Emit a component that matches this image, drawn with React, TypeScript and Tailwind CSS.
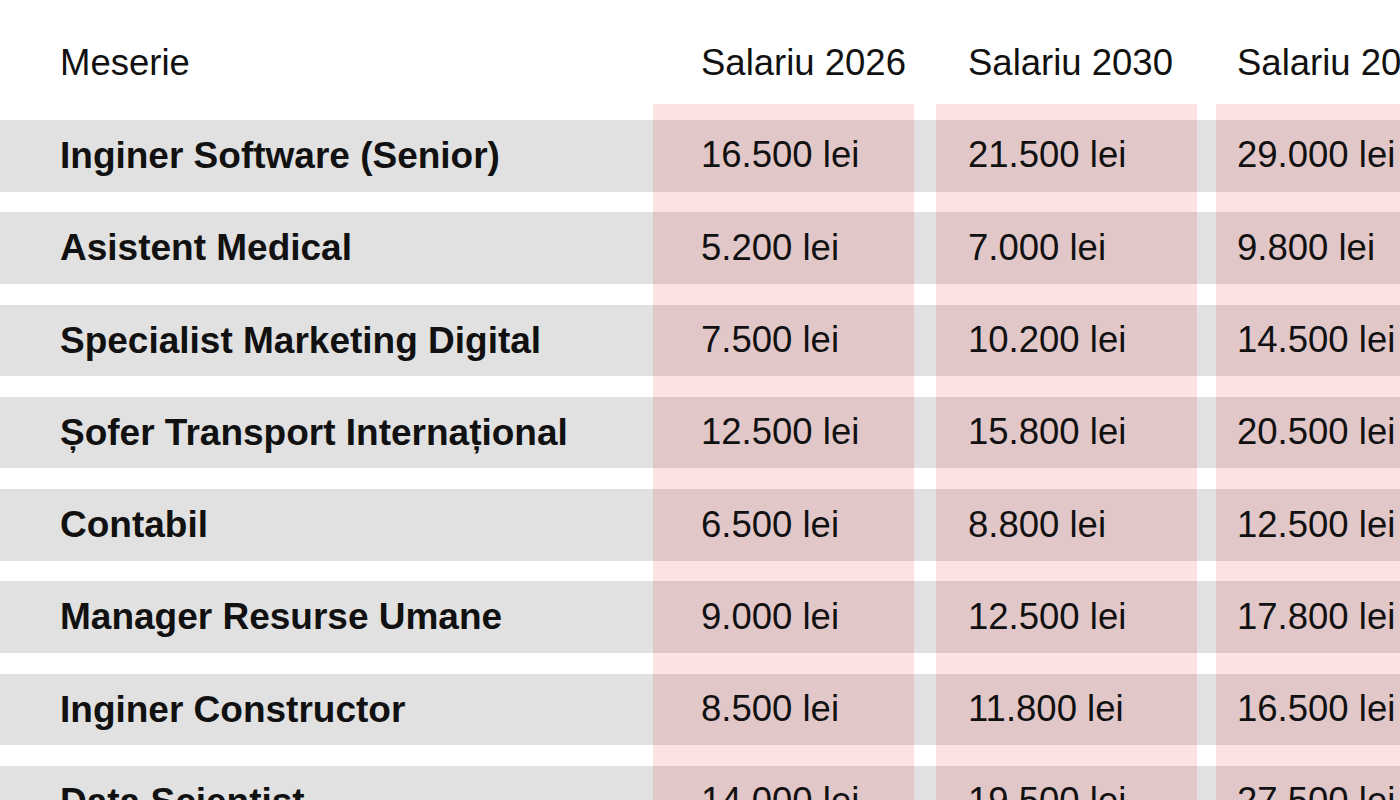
const rows = [
  { job: "Inginer Software (Senior)", s26: "16.500 lei", s30: "21.500 lei", s35: "29.000 lei" },
  { job: "Asistent Medical", s26: "5.200 lei", s30: "7.000 lei", s35: "9.800 lei" },
  { job: "Specialist Marketing Digital", s26: "7.500 lei", s30: "10.200 lei", s35: "14.500 lei" },
  { job: "Șofer Transport Internațional", s26: "12.500 lei", s30: "15.800 lei", s35: "20.500 lei" },
  { job: "Contabil", s26: "6.500 lei", s30: "8.800 lei", s35: "12.500 lei" },
  { job: "Manager Resurse Umane", s26: "9.000 lei", s30: "12.500 lei", s35: "17.800 lei" },
  { job: "Inginer Constructor", s26: "8.500 lei", s30: "11.800 lei", s35: "16.500 lei" },
  { job: "Data Scientist", s26: "14.000 lei", s30: "19.500 lei", s35: "27.500 lei" },
];

const App = () => {
  return (
    <div className="h-[800px] w-[1400px] overflow-hidden bg-white font-['Liberation_Sans',Arial,sans-serif] text-[#111]">
      <div className="grid">
        {/* Row bands */}
        <div className="col-start-1 row-start-1 flex flex-col gap-[20.8px] pt-[120px]">
          {rows.map((r) => (
            <div key={r.job} className="h-[71.5px] shrink-0 bg-[#e1e1e1]" />
          ))}
        </div>

        {/* Highlighted salary columns */}
        <div className="col-start-1 row-start-1 flex pl-[653px] pt-[104px]">
          <div className="w-[261px] shrink-0 bg-[rgba(240,0,20,0.115)]" />
          <div className="ml-[21.5px] w-[261.5px] shrink-0 bg-[rgba(240,0,20,0.115)]" />
          <div className="ml-[19px] w-[261px] shrink-0 bg-[rgba(240,0,20,0.115)]" />
        </div>

        {/* Table text */}
        <div className="col-start-1 row-start-1 flex flex-col">
          <div className="flex h-[120px] items-center pt-[6px] pl-[60px] text-[36.5px] whitespace-nowrap">
            <div className="w-[641px] shrink-0">Meserie</div>
            <div className="w-[267px] shrink-0">Salariu 2026</div>
            <div className="w-[269px] shrink-0">Salariu 2030</div>
            <div className="w-[269px] shrink-0">Salariu 2035</div>
          </div>
          <div className="flex flex-col gap-[20.8px]">
            {rows.map((r) => (
              <div key={r.job} className="flex h-[71.5px] shrink-0 items-center pl-[60px] whitespace-nowrap">
                <div className="w-[641px] shrink-0 text-[37px] font-bold">{r.job}</div>
                <div className="w-[267px] shrink-0 text-[36.5px]">{r.s26}</div>
                <div className="w-[269px] shrink-0 text-[36.5px]">{r.s30}</div>
                <div className="w-[269px] shrink-0 text-[36.5px]">{r.s35}</div>
              </div>
            ))}
          </div>
        </div>
      </div>
    </div>
  );
};

export default App;
